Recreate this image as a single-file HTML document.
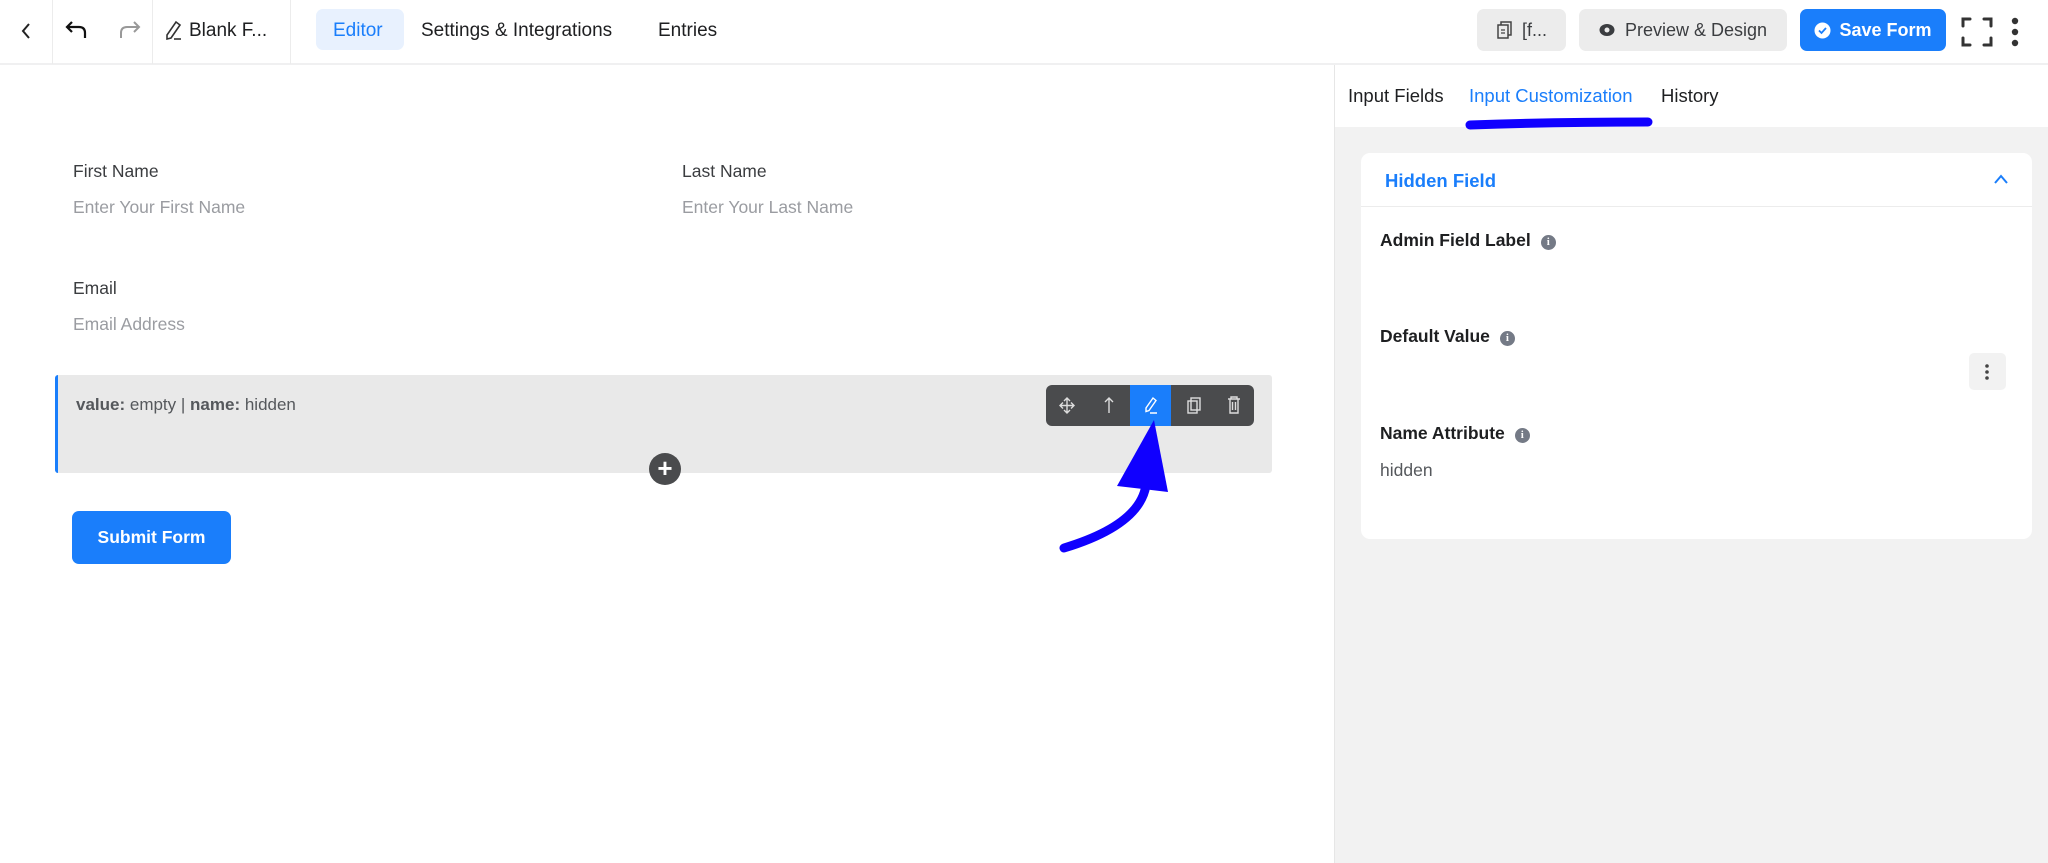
<!DOCTYPE html>
<html><head><meta charset="utf-8"><style>
*{margin:0;padding:0;box-sizing:border-box}
body{width:2048px;height:863px;overflow:hidden;background:#fff;font-family:"Liberation Sans",Arial,sans-serif;position:relative;color:#1e1f21}
.a{position:absolute;white-space:nowrap}
.nav{font-size:19px;color:#1e1f21;top:20px}
.lbl{font-size:17.5px;color:#3b3d40}
.ph{font-size:17.5px;color:#9a9ca1}
.rl{font-size:17.5px;font-weight:bold;color:#1e1f21}
.info{display:inline-block;width:15px;height:15px;border-radius:50%;background:#747a86;color:#fff;font-size:11px;font-weight:bold;text-align:center;line-height:15px;font-family:"Liberation Serif",serif;vertical-align:1px;margin-left:10px}
.btn{position:absolute;top:9px;height:42px;border-radius:7px;background:#ececec;font-size:18px;color:#3b3d40;display:flex;align-items:center;justify-content:center}
</style></head><body>
<!-- header -->
<div class="a" style="left:0;top:63px;width:2048px;height:2px;background:#f0f0f1"></div>
<div class="a" style="left:52px;top:0;width:1px;height:64px;background:#ececec"></div>
<div class="a" style="left:152px;top:0;width:1px;height:64px;background:#ececec"></div>
<div class="a" style="left:290px;top:0;width:1px;height:64px;background:#ececec"></div>
<svg class="a" style="left:18px;top:20px" width="16" height="22" viewBox="0 0 16 22"><path d="M11 4 L5 11 L11 18" fill="none" stroke="#222" stroke-width="2"/></svg>
<svg class="a" style="left:64px;top:18px" width="26" height="24" viewBox="0 0 26 24"><path d="M8 4 L3 9 L8 14 M3 9 H15 Q21 9 21 15 V20" fill="none" stroke="#111" stroke-width="2.2"/></svg>
<svg class="a" style="left:116px;top:18px" width="26" height="24" viewBox="0 0 26 24"><path d="M18 4 L23 9 L18 14 M23 9 H11 Q5 9 5 15 V20" fill="none" stroke="#999" stroke-width="2"/></svg>
<svg class="a" style="left:164px;top:19px" width="22" height="24" viewBox="0 0 22 24"><path d="M12 3 L16 6 L7 19 L3 20 L3 16 Z M11 24" fill="none" stroke="#333" stroke-width="1.6"/><path d="M10 20 H17" stroke="#333" stroke-width="1.6"/></svg>
<div class="a nav" style="left:189px">Blank F...</div>
<div class="a" style="left:316px;top:9px;width:88px;height:41px;border-radius:7px;background:#e8f1fe"></div>
<div class="a nav" style="left:333px;color:#1a7efb">Editor</div>
<div class="a nav" style="left:421px">Settings &amp; Integrations</div>
<div class="a nav" style="left:658px">Entries</div>
<div class="btn" style="left:1477px;width:89px"><svg width="18" height="20" viewBox="0 0 18 20" style="margin-right:8px"><rect x="5" y="2" width="10" height="13" fill="none" stroke="#444" stroke-width="1.5"/><rect x="2" y="5" width="10" height="13" fill="#ececec" stroke="#444" stroke-width="1.5"/><path d="M5 10h4M5 13h4" stroke="#444" stroke-width="1.3"/></svg>[f...</div>
<div class="btn" style="left:1579px;width:208px"><svg width="16" height="16" viewBox="0 0 16 16" style="margin-right:10px"><ellipse cx="8" cy="8" rx="7.5" ry="6" fill="#3b3d40"/><circle cx="8" cy="8" r="2.5" fill="#ececec"/></svg>Preview &amp; Design</div>
<div class="btn" style="left:1800px;width:146px;background:#1a7efb;color:#fff;font-weight:bold"><svg width="17" height="17" viewBox="0 0 17 17" style="margin-right:8px"><circle cx="8.5" cy="8.5" r="8" fill="#fff"/><path d="M5 8.5l2.5 2.5 4.5-5" fill="none" stroke="#1a7efb" stroke-width="1.8"/></svg>Save Form</div>
<svg class="a" style="left:1961px;top:16px" width="32" height="32" viewBox="0 0 32 32"><path d="M2 10V3h7M23 3h7v7M30 22v7h-7M9 29H2v-7" fill="none" stroke="#333" stroke-width="3" stroke-linecap="round"/></svg>
<svg class="a" style="left:2010px;top:16px" width="10" height="32" viewBox="0 0 10 32"><circle cx="5" cy="5" r="3.2" fill="#333"/><circle cx="5" cy="16" r="3.2" fill="#333"/><circle cx="5" cy="27" r="3.2" fill="#333"/></svg>

<!-- right panel -->
<div class="a" style="left:1334px;top:65px;width:1px;height:798px;background:#e6e6e6"></div>
<div class="a" style="left:1335px;top:127px;width:713px;height:736px;background:#f2f2f2"></div>
<div class="a nav" style="left:1348px;top:85px;font-size:18.5px">Input Fields</div>
<div class="a nav" style="left:1469px;top:85px;font-size:18.5px;color:#1a7efb">Input Customization</div>
<div class="a nav" style="left:1661px;top:85px;font-size:18.5px">History</div>
<svg class="a" style="left:1464px;top:116px" width="192" height="16" viewBox="0 0 192 16"><path d="M6 9 Q90 6 184 6" fill="none" stroke="#1000ff" stroke-width="9" stroke-linecap="round"/></svg>
<div class="a" style="left:1361px;top:153px;width:671px;height:386px;background:#fff;border-radius:9px"></div>
<div class="a" style="left:1361px;top:206px;width:671px;height:1px;background:#ececec"></div>
<div class="a" style="left:1385px;top:170px;font-size:18.5px;font-weight:bold;color:#1a7efb">Hidden Field</div>
<svg class="a" style="left:1993px;top:173px" width="16" height="12" viewBox="0 0 16 12"><path d="M2 10L8 3l6 7" fill="none" stroke="#1a7efb" stroke-width="2"/></svg>
<div class="a rl" style="left:1380px;top:230px">Admin Field Label<span class="info">i</span></div>
<div class="a rl" style="left:1380px;top:326px">Default Value<span class="info">i</span></div>
<div class="a" style="left:1969px;top:353px;width:37px;height:37px;border-radius:5px;background:#f2f2f2"></div>
<svg class="a" style="left:1984px;top:362px" width="6" height="20" viewBox="0 0 6 20"><circle cx="3" cy="4" r="1.8" fill="#444"/><circle cx="3" cy="10" r="1.8" fill="#444"/><circle cx="3" cy="16" r="1.8" fill="#444"/></svg>
<div class="a rl" style="left:1380px;top:423px">Name Attribute<span class="info">i</span></div>
<div class="a" style="left:1380px;top:460px;font-size:17.5px;color:#55585c">hidden</div>

<!-- form -->
<div class="a lbl" style="left:73px;top:161px">First Name</div>
<div class="a ph" style="left:73px;top:197px">Enter Your First Name</div>
<div class="a lbl" style="left:682px;top:161px">Last Name</div>
<div class="a ph" style="left:682px;top:197px">Enter Your Last Name</div>
<div class="a lbl" style="left:73px;top:278px">Email</div>
<div class="a ph" style="left:73px;top:314px">Email Address</div>
<div class="a" style="left:55px;top:375px;width:1217px;height:98px;background:#e9e9e9;border-left:3px solid #1a7efb;border-radius:3px"></div>
<div class="a" style="left:76px;top:395px;font-size:17px;color:#55585c"><b>value:</b> empty | <b>name:</b> hidden</div>
<div class="a" style="left:1046px;top:385px;width:208px;height:41px;background:#4a4b4d;border-radius:6px"></div>
<div class="a" style="left:1130px;top:385px;width:41px;height:41px;background:#1a7efb"></div>
<svg class="a" style="left:1046px;top:385px" width="208" height="41" viewBox="0 0 208 41">
<g fill="none" stroke="#ddd" stroke-width="1.4">
<path d="M21 13v15M14 20.5h14M18 16l3-3 3 3M18 25l3 3 3-3M17 17.5l-3 3 3 3M25 17.5l3 3-3 3"/>
<path d="M63 28V13M59 17l4-4 4 4"/>
<path d="M107 13l3 2.5-7 10-3 1v-3.5z M104 28h7" stroke="#fff"/>
<rect x="145" y="13" width="9" height="12"/><rect x="142" y="16" width="9" height="12"/>
<path d="M182 14h12M185 14v-2h6v2M184 14v14h8V14M186.5 17v8M189.5 17v8"/>
</g></svg>
<div class="a" style="left:649px;top:453px;width:32px;height:32px;border-radius:50%;background:#4a4b4d;color:#fff;font-size:26px;line-height:30px;text-align:center;font-weight:bold">+</div>
<div class="a" style="left:72px;top:511px;width:159px;height:53px;border-radius:7px;background:#1a7efb;color:#fff;font-size:17.5px;font-weight:bold;line-height:53px;text-align:center">Submit Form</div>
<svg class="a" style="left:1050px;top:415px" width="130" height="145" viewBox="0 0 130 145">
<path d="M14 133 Q90 110 96 70" fill="none" stroke="#1000ff" stroke-width="9" stroke-linecap="round"/>
<path d="M104 5 L67 71 L118 77 Z" fill="#1000ff"/>
</svg>
</body></html>
